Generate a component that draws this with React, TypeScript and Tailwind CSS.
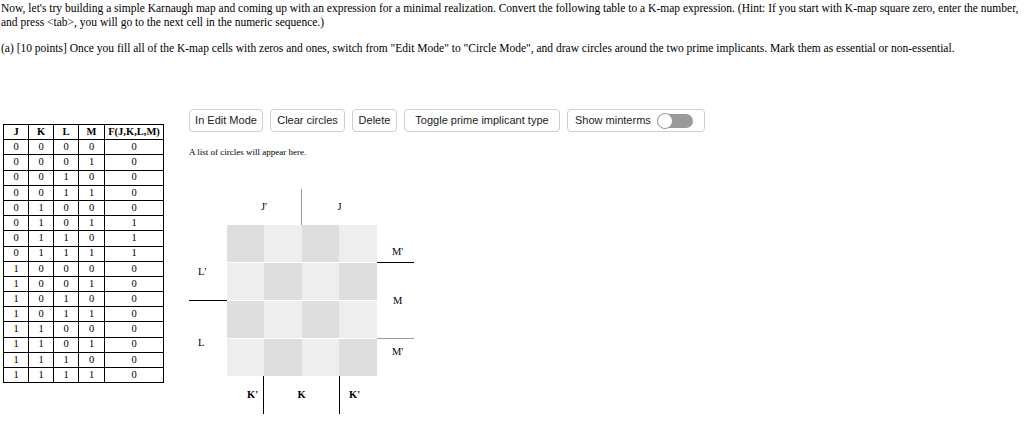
import React from 'react';

const rows: number[][] = [
  [0, 0, 0, 0, 0],
  [0, 0, 0, 1, 0],
  [0, 0, 1, 0, 0],
  [0, 0, 1, 1, 0],
  [0, 1, 0, 0, 0],
  [0, 1, 0, 1, 1],
  [0, 1, 1, 0, 1],
  [0, 1, 1, 1, 1],
  [1, 0, 0, 0, 0],
  [1, 0, 0, 1, 0],
  [1, 0, 1, 0, 0],
  [1, 0, 1, 1, 0],
  [1, 1, 0, 0, 0],
  [1, 1, 0, 1, 0],
  [1, 1, 1, 0, 0],
  [1, 1, 1, 1, 0],
];

const colWidths = ['w-[25px]', 'w-[25px]', 'w-[25px]', 'w-[26px]', 'w-[59px]'];

const TruthTable: React.FC = () => (
  <table className="border-collapse text-[10.5px] leading-none text-black">
    <thead>
      <tr className="h-[15.2px]">
        {['J', 'K', 'L', 'M', 'F(J,K,L,M)'].map((h, i) => (
          <th key={h} className={`${colWidths[i]} border border-black p-0 text-center font-bold`}>
            {h}
          </th>
        ))}
      </tr>
    </thead>
    <tbody>
      {rows.map((r, ri) => (
        <tr key={ri} className="h-[15.2px]">
          {r.map((v, ci) => (
            <td key={ci} className="border border-black p-0 text-center">
              {v}
            </td>
          ))}
        </tr>
      ))}
    </tbody>
  </table>
);

const Btn: React.FC<{ className?: string; children: React.ReactNode }> = ({ className = '', children }) => (
  <button
    className={`h-[23px] rounded-[4px] border border-[#cfcfcf] bg-white text-[11px] text-[#222] font-['Liberation_Sans',Arial,sans-serif] flex items-center justify-center ${className}`}
  >
    {children}
  </button>
);

// checkerboard: true = dark
const dark = (r: number, c: number) => (r + c) % 2 === 0;

const KMap: React.FC = () => (
  <div className="grid grid-cols-[38px_150px_37px] grid-rows-[36px_151px_38px] text-[10.5px] leading-[12px] text-black">
    {/* top labels */}
    <div />
    <div className="flex">
      <div className="w-[75px] border-r border-[#999] flex items-center justify-center">J'</div>
      <div className="flex-1 flex items-center justify-center">J</div>
    </div>
    <div />

    {/* left labels */}
    <div className="flex flex-col">
      <div className="h-[76px] border-b border-black flex items-center pl-[9px] pt-[18px]">L'</div>
      <div className="flex-1 flex items-center pl-[9px] pt-[8px]">L</div>
    </div>

    {/* cells */}
    <div className="grid grid-cols-[37px_38px_37px_38px] gap-y-px bg-white">
      {[0, 1, 2, 3].map((r) =>
        [0, 1, 2, 3].map((c) => (
          <div key={`${r}-${c}`} className={`h-[37px] ${dark(r, c) ? 'bg-[#dedede]' : 'bg-[#eeeeee]'}`} />
        ))
      )}
    </div>

    {/* right labels */}
    <div className="flex flex-col">
      <div className="h-[38px] border-b border-black flex items-end pl-[15px] pb-[4px]">M'</div>
      <div className="h-[76px] border-b border-[#999] flex items-center pl-[16px]">M</div>
      <div className="flex-1 flex items-start pl-[15px] pt-[7px]">M'</div>
    </div>

    {/* bottom labels */}
    <div />
    <div className="flex font-bold">
      <div className="w-[37px] border-r border-black flex items-center pl-[20px]">K'</div>
      <div className="w-[76px] border-r border-black flex items-center justify-center">K</div>
      <div className="flex-1 flex items-center pl-[9px]">K'</div>
    </div>
    <div />
  </div>
);

export default function App() {
  return (
    <div className="w-[1024px] h-[426px] overflow-hidden bg-white text-black font-['Liberation_Serif','Times_New_Roman',serif]">
      <div className="pl-[1px] pt-[1px] text-[11.5px] leading-[14px] whitespace-nowrap">
        <p>
          Now, let's try building a simple Karnaugh map and coming up with an expression for a minimal realization. Convert the following table to a K-map expression. (Hint: If you start with K-map square zero, enter the number,
          <br />
          and press &lt;tab&gt;, you will go to the next cell in the numeric sequence.)
        </p>
        <p className="mt-[12px]">
          (a) [10 points] Once you fill all of the K-map cells with zeros and ones, switch from "Edit Mode" to "Circle Mode", and draw circles around the two prime implicants. Mark them as essential or non-essential.
        </p>
      </div>

      <div className="flex mt-[54px]">
        <div className="pl-[3px] pt-[15px]">
          <TruthTable />
        </div>

        <div className="ml-[25px]">
          <div className="flex gap-[7px]">
            <Btn className="w-[74px]">In Edit Mode</Btn>
            <Btn className="w-[75px]">Clear circles</Btn>
            <Btn className="w-[45px]">Delete</Btn>
            <Btn className="w-[156px]">Toggle prime implicant type</Btn>
            <Btn className="w-[138px] justify-start pl-[7px]">
              <span className="mr-[6px]">Show minterms</span>
              <span className="w-[36px] h-[14px] rounded-full bg-[#9a9a9a] flex items-center">
                <span className="w-[16px] h-[16px] rounded-full bg-white border border-[#999]" />
              </span>
            </Btn>
          </div>
          <p className="mt-[14px] text-[9px] leading-[12px]">A list of circles will appear here.</p>
          <div className="mt-[31px]">
            <KMap />
          </div>
        </div>
      </div>
    </div>
  );
}
